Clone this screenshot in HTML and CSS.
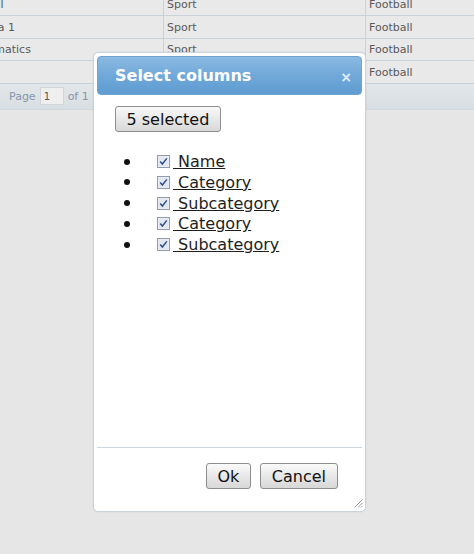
FILE: index.html
```html
<!DOCTYPE html>
<html>
<head>
<meta charset="utf-8">
<title>Select columns</title>
<link rel="stylesheet" href="styles.css">
</head>
<body>
<div class="grid">
  <div class="row"><div class="cell">Football</div><div class="cell">Sport</div><div class="cell">Football</div></div>
  <div class="row"><div class="cell">Formula 1</div><div class="cell">Sport</div><div class="cell">Football</div></div>
  <div class="row"><div class="cell">Mathematics</div><div class="cell">Sport</div><div class="cell">Football</div></div>
  <div class="row"><div class="cell">Hockey</div><div class="cell">Sport</div><div class="cell">Football</div></div>
  <div class="pager"><span>Page</span><input class="pg" value="1"><span>of 1</span></div>
</div>

<div class="dialog">
  <div class="titlebar"><span class="title">Select columns</span><span class="close">×</span></div>
  <div class="content">
    <button class="btn">5 selected</button>
    <ul class="cols">
      <li><span class="cb"><svg width="13" height="13" viewBox="0 0 13 13"><rect x="0.5" y="0.5" width="12" height="12" fill="#eef1f6" stroke="#8f9db0"/><rect x="1.5" y="1.5" width="10" height="10" fill="#e3e8f0"/><path d="M3.2 6.4 L5.4 9 L9.8 3.4" fill="none" stroke="#2d4f8f" stroke-width="1.5"/></svg></span><a href="#" class="lnk">&nbsp;Name</a></li>
      <li><span class="cb"><svg width="13" height="13" viewBox="0 0 13 13"><rect x="0.5" y="0.5" width="12" height="12" fill="#eef1f6" stroke="#8f9db0"/><rect x="1.5" y="1.5" width="10" height="10" fill="#e3e8f0"/><path d="M3.2 6.4 L5.4 9 L9.8 3.4" fill="none" stroke="#2d4f8f" stroke-width="1.5"/></svg></span><a href="#" class="lnk">&nbsp;Category</a></li>
      <li><span class="cb"><svg width="13" height="13" viewBox="0 0 13 13"><rect x="0.5" y="0.5" width="12" height="12" fill="#eef1f6" stroke="#8f9db0"/><rect x="1.5" y="1.5" width="10" height="10" fill="#e3e8f0"/><path d="M3.2 6.4 L5.4 9 L9.8 3.4" fill="none" stroke="#2d4f8f" stroke-width="1.5"/></svg></span><a href="#" class="lnk">&nbsp;Subcategory</a></li>
      <li><span class="cb"><svg width="13" height="13" viewBox="0 0 13 13"><rect x="0.5" y="0.5" width="12" height="12" fill="#eef1f6" stroke="#8f9db0"/><rect x="1.5" y="1.5" width="10" height="10" fill="#e3e8f0"/><path d="M3.2 6.4 L5.4 9 L9.8 3.4" fill="none" stroke="#2d4f8f" stroke-width="1.5"/></svg></span><a href="#" class="lnk">&nbsp;Category</a></li>
      <li><span class="cb"><svg width="13" height="13" viewBox="0 0 13 13"><rect x="0.5" y="0.5" width="12" height="12" fill="#eef1f6" stroke="#8f9db0"/><rect x="1.5" y="1.5" width="10" height="10" fill="#e3e8f0"/><path d="M3.2 6.4 L5.4 9 L9.8 3.4" fill="none" stroke="#2d4f8f" stroke-width="1.5"/></svg></span><a href="#" class="lnk">&nbsp;Subcategory</a></li>
    </ul>
  </div>
  <div class="pane">
    <button class="btn">Ok</button>
    <button class="btn">Cancel</button>
  </div>
  <svg class="grip" width="11" height="11" viewBox="0 0 11 11"><path d="M10.5 2.5 L2.5 10.5 M10.5 6 L6 10.5 M10.5 9 L9 10.5" stroke="#929ca6" stroke-width="1" fill="none"/></svg>
</div>
</body>
</html>
```

FILE: styles.css
```css
html, body {
  margin: 0;
  height: 100%;
}
body {
  background: #e6e6e6;
  font-family: "DejaVu Sans", sans-serif;
  overflow: hidden;
  position: relative;
}
.grid {
  margin-top: -6.5px;
  margin-left: -43px;
  width: 517px;
}
.row {
  display: grid;
  grid-template-columns: 207px 202px 1fr;
  height: 22.5px;
  box-sizing: border-box;
  border-bottom: 1px solid #c7d2db;
  background: #e9e9e9;
}
.cell {
  border-right: 1px solid #c7d2db;
  padding: 1.5px 3px 0;
  font-size: 11px;
  line-height: 20px;
  color: #595959;
  white-space: nowrap;
  overflow: hidden;
}
.cell:last-child {
  border-right: none;
}
.pager {
  height: 26px;
  box-sizing: border-box;
  padding-left: 52px;
  display: flex;
  align-items: center;
  gap: 4px;
  background: linear-gradient(#e3e7ea, #d9dee2);
  border-bottom: 1px solid #d0d7dd;
  font-size: 11px;
  color: #8596ab;
}
.pg {
  width: 24px;
  height: 18px;
  box-sizing: border-box;
  border: 1px solid #d3d6d9;
  background: #efefef;
  font: 10px "DejaVu Sans", sans-serif;
  color: #555;
  padding: 0 3px;
  margin: 0;
}
.dialog {
  position: absolute;
  left: 93px;
  top: 52px;
  width: 273px;
  height: 460px;
  box-sizing: border-box;
  border: 1px solid #c8d3db;
  border-radius: 5px;
  background: #fff;
  padding: 3px;
  display: flex;
  flex-direction: column;
  box-shadow: 0 0 2px rgba(0,0,0,0.08);
}
.titlebar {
  height: 39px;
  flex: none;
  box-sizing: border-box;
  border: 1px solid #6ea2cf;
  border-radius: 4px;
  background: linear-gradient(#8bbae2, #70a8d9 50%, #5f9cd1);
  color: #fff;
  padding: 0 9px 0 17px;
  display: flex;
  align-items: center;
  justify-content: space-between;
}
.title {
  font-weight: bold;
  font-size: 16px;
}
.close {
  font-weight: bold;
  font-size: 14px;
  color: #e3edf7;
  padding-top: 2px;
}
.content {
  flex: 1;
  padding: 11px 0 0 18px;
}
.btn {
  height: 26px;
  box-sizing: border-box;
  padding: 0 10.5px;
  margin: 0;
  font: 16px "DejaVu Sans", sans-serif;
  color: #111;
  border: 1px solid #8e8e8e;
  border-radius: 3px;
  background: linear-gradient(#fafafa, #e8e8e8 50%, #d8d8d8);
}
.cols {
  list-style: none;
  margin: 19.2px 0 0;
  padding: 0 0 0 9px;
}
.cols li {
  display: flex;
  align-items: center;
  height: 20.75px;
  font-size: 16px;
}
.cols li::before {
  content: "";
  width: 6px;
  height: 6px;
  border-radius: 50%;
  background: #111;
  margin-right: 27px;
  flex: none;
}
.cb {
  display: block;
  width: 13px;
  height: 13px;
  margin-right: 3px;
  flex: none;
}
.cb svg {
  display: block;
}
.lnk {
  color: #1e1e1e;
  text-decoration: underline;
}
.pane {
  height: 61px;
  flex: none;
  box-sizing: border-box;
  border-top: 1px solid #ccd6de;
  display: flex;
  justify-content: flex-end;
  align-items: flex-start;
  gap: 9.5px;
  padding: 15px 24.5px 0 0;
}
.grip {
  position: absolute;
  right: 2px;
  bottom: 3px;
}
```
